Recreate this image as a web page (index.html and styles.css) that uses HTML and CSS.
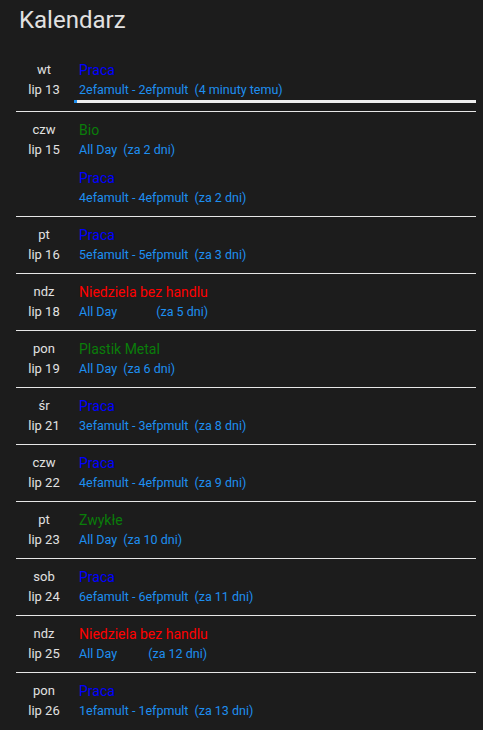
FILE: index.html
```html
<!DOCTYPE html>
<html lang="pl">
<head>
    <meta charset="UTF-8">
    <meta name="viewport" content="width=device-width, initial-scale=1.0">
    <title>Kalendarz</title>
    <link rel="stylesheet" href="styles.css">
</head>
<body>
    <div class="card">
        <div class="card-header">Kalendarz</div>
        <div class="day-list">
            <div class="day">
                <div class="date"><div>wt</div><div>lip 13</div></div>
                <div class="events">
                    <div class="event">
                        <div class="title work">Praca</div>
                        <div class="detail"><span class="time">2efamult - 2efpmult</span><span class="rel">(4 minuty temu)</span></div>
                        <div class="progress"><div class="progress-fill"></div></div>
                    </div>
                </div>
            </div>
            <div class="day">
                <div class="date"><div>czw</div><div>lip 15</div></div>
                <div class="events">
                    <div class="event">
                        <div class="title green">Bio</div>
                        <div class="detail"><span class="time">All Day</span><span class="rel">(za 2 dni)</span></div>
                    </div>
                    <div class="event">
                        <div class="title work">Praca</div>
                        <div class="detail"><span class="time">4efamult - 4efpmult</span><span class="rel">(za 2 dni)</span></div>
                    </div>
                </div>
            </div>
            <div class="day">
                <div class="date"><div>pt</div><div>lip 16</div></div>
                <div class="events">
                    <div class="event">
                        <div class="title work">Praca</div>
                        <div class="detail"><span class="time">5efamult - 5efpmult</span><span class="rel">(za 3 dni)</span></div>
                    </div>
                </div>
            </div>
            <div class="day">
                <div class="date"><div>ndz</div><div>lip 18</div></div>
                <div class="events">
                    <div class="event">
                        <div class="title holiday">Niedziela bez handlu</div>
                        <div class="detail"><span class="time">All Day</span><span class="rel wide">(za 5 dni)</span></div>
                    </div>
                </div>
            </div>
            <div class="day">
                <div class="date"><div>pon</div><div>lip 19</div></div>
                <div class="events">
                    <div class="event">
                        <div class="title green">Plastik Metal</div>
                        <div class="detail"><span class="time">All Day</span><span class="rel">(za 6 dni)</span></div>
                    </div>
                </div>
            </div>
            <div class="day">
                <div class="date"><div>śr</div><div>lip 21</div></div>
                <div class="events">
                    <div class="event">
                        <div class="title work">Praca</div>
                        <div class="detail"><span class="time">3efamult - 3efpmult</span><span class="rel">(za 8 dni)</span></div>
                    </div>
                </div>
            </div>
            <div class="day">
                <div class="date"><div>czw</div><div>lip 22</div></div>
                <div class="events">
                    <div class="event">
                        <div class="title work">Praca</div>
                        <div class="detail"><span class="time">4efamult - 4efpmult</span><span class="rel">(za 9 dni)</span></div>
                    </div>
                </div>
            </div>
            <div class="day">
                <div class="date"><div>pt</div><div>lip 23</div></div>
                <div class="events">
                    <div class="event">
                        <div class="title green">Zwykłe</div>
                        <div class="detail"><span class="time">All Day</span><span class="rel">(za 10 dni)</span></div>
                    </div>
                </div>
            </div>
            <div class="day">
                <div class="date"><div>sob</div><div>lip 24</div></div>
                <div class="events">
                    <div class="event">
                        <div class="title work">Praca</div>
                        <div class="detail"><span class="time">6efamult - 6efpmult</span><span class="rel">(za 11 dni)</span></div>
                    </div>
                </div>
            </div>
            <div class="day">
                <div class="date"><div>ndz</div><div>lip 25</div></div>
                <div class="events">
                    <div class="event">
                        <div class="title holiday">Niedziela bez handlu</div>
                        <div class="detail"><span class="time">All Day</span><span class="rel wider">(za 12 dni)</span></div>
                    </div>
                </div>
            </div>
            <div class="day">
                <div class="date"><div>pon</div><div>lip 26</div></div>
                <div class="events">
                    <div class="event">
                        <div class="title work">Praca</div>
                        <div class="detail"><span class="time">1efamult - 1efpmult</span><span class="rel">(za 13 dni)</span></div>
                    </div>
                </div>
            </div>
        </div>
    </div>
</body>
</html>
```

FILE: styles.css
```css
body {
    margin: 0;
    background-color: #1c1c1c;
    font-family: Roboto, "Noto Sans", sans-serif;
    color: #e1e1e1;
}
.card {
    padding: 4px 7px 0 16px;
}
.card-header {
    font-size: 24px;
    line-height: 32px;
    padding-left: 3px;
    margin-bottom: 16px;
}
.day {
    display: flex;
    padding: 8px 0;
    border-top: 1px solid #e6e6e6;
}
.day:first-child {
    border-top: none;
    padding-bottom: 8px;
}
.date {
    width: 56px;
    flex-shrink: 0;
    text-align: center;
    font-size: 13px;
    line-height: 20px;
}
.events {
    flex: 1;
    padding-left: 2px;
}
.event + .event {
    margin-top: 8px;
}
.title,
.detail {
    font-size: 12.5px;
    line-height: 20px;
    padding-left: 5px;
}
.title {
    font-size: 14px;
}
.work {
    color: #0000ff;
}
.green {
    color: #0a7d0a;
}
.holiday {
    color: #ff0000;
}
.detail {
    color: #1e8ff0;
}
.rel {
    margin-left: 6px;
}
.rel.wide {
    margin-left: 39px;
}
.rel.wider {
    margin-left: 31px;
}
.progress {
    height: 3px;
    background-color: #eeeeee;
}
.progress-fill {
    width: 3px;
    height: 100%;
    background-color: #1e8ff0;
}
```
